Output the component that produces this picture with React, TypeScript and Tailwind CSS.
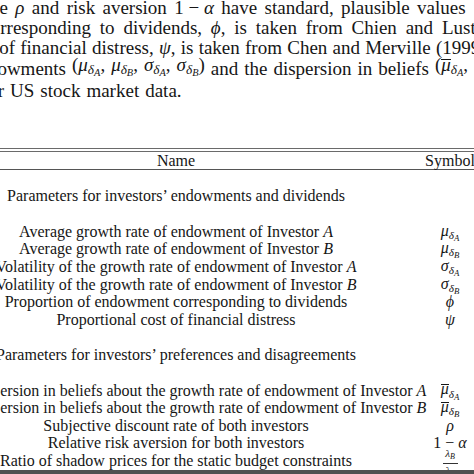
import React from "react";

const SerifWrap = "font-['Liberation_Serif','Times_New_Roman',serif]";

function MS({ b, l, bar }: { b: string; l: string; bar?: boolean }) {
  return (
    <span className="whitespace-nowrap">
      {bar ? (
        <span className="inline-block italic leading-[0.55] border-t border-current">{b}</span>
      ) : (
        <span className="italic">{b}</span>
      )}
      <span className="italic text-[0.7em] align-[-0.28em]">
        δ<span className="italic text-[0.78em] align-[-0.22em]">{l}</span>
      </span>
    </span>
  );
}

function Frac() {
  return (
    <span className="inline-flex flex-col items-center italic text-[11px] leading-[10px] align-middle relative top-[2px]">
      <span>
        λ<span className="text-[8px] align-[-2px]">B</span>
      </span>
      <span className="h-px w-[15px] bg-[#333] my-[1px]"></span>
      <span>
        λ<span className="text-[8px] align-[-2px]">A</span>
      </span>
    </span>
  );
}

type Row = { name?: React.ReactNode; sym?: React.ReactNode };

const rows: Row[] = [
  {},
  { name: "Parameters for investors’ endowments and dividends" },
  {},
  { name: <>Average growth rate of endowment of Investor <i>A</i></>, sym: <MS b="μ" l="A" /> },
  { name: <>Average growth rate of endowment of Investor <i>B</i></>, sym: <MS b="μ" l="B" /> },
  { name: <>Volatility of the growth rate of endowment of Investor <i>A</i></>, sym: <MS b="σ" l="A" /> },
  { name: <>Volatility of the growth rate of endowment of Investor <i>B</i></>, sym: <MS b="σ" l="B" /> },
  { name: "Proportion of endowment corresponding to dividends", sym: <i>ϕ</i> },
  { name: "Proportional cost of financial distress", sym: <i>ψ</i> },
  {},
  { name: "Parameters for investors’ preferences and disagreements" },
  {},
  { name: <>Dispersion in beliefs about the growth rate of endowment of Investor <i>A</i></>, sym: <MS b="μ" l="A" bar /> },
  { name: <>Dispersion in beliefs about the growth rate of endowment of Investor <i>B</i></>, sym: <MS b="μ" l="B" bar /> },
  { name: "Subjective discount rate of both investors", sym: <i>ρ</i> },
  { name: "Relative risk aversion for both investors", sym: <>1 − <i>α</i></> },
  { name: "Ratio of shadow prices for the static budget constraints", sym: <Frac /> },
];

export default function App() {
  return (
    <div className={`w-[474px] h-[474px] overflow-hidden bg-white text-[#161616] ${SerifWrap}`}>
      {/* paragraph */}
      <div className="mt-[-2px] text-[19px] leading-[20px]">
        <div className="flex justify-between items-center h-[20px] whitespace-nowrap ml-[-32px] w-[509px]">
          <span className="w-[40px] text-right">rate</span>
          <i>ρ</i>
          <span>and</span>
          <span>risk</span>
          <span>aversion</span>
          <span>
            1 − <i>α</i>
          </span>
          <span>have</span>
          <span>standard,</span>
          <span>plausible</span>
          <span className="w-[60px]">values</span>
        </div>
        <div className="flex justify-between items-center h-[20px] whitespace-nowrap ml-[-29px] w-[531px]">
          <span className="w-[120px] text-right">corresponding</span>
          <span>to</span>
          <span>dividends,</span>
          <span>
            <i>ϕ</i>,
          </span>
          <span>is</span>
          <span>taken</span>
          <span>from</span>
          <span>Chien</span>
          <span>and</span>
          <span className="w-[60px]">Lustig</span>
        </div>
        <div className="flex justify-between items-center h-[20px] whitespace-nowrap ml-[-15px] w-[511px]">
          <span className="w-[30px] text-right">of</span>
          <span>financial</span>
          <span>distress,</span>
          <span>
            <i>ψ</i>,
          </span>
          <span>is</span>
          <span>taken</span>
          <span>from</span>
          <span>Chen</span>
          <span>and</span>
          <span>Merville</span>
          <span className="w-[60px]">(1999),</span>
        </div>
        <div className="flex justify-between items-center h-[22px] whitespace-nowrap ml-[-34px] w-[529px]">
          <span className="w-[100px] text-right">endowments</span>
          <span className="inline-flex gap-[6px]">
            <span>
              (<MS b="μ" l="A" />,
            </span>
            <span>
              <MS b="μ" l="B" />,
            </span>
            <span>
              <MS b="σ" l="A" />,
            </span>
            <span>
              <MS b="σ" l="B" />)
            </span>
          </span>
          <span>and</span>
          <span>the</span>
          <span>dispersion</span>
          <span>in</span>
          <span>beliefs</span>
          <span className="w-[60px]">
            (<MS b="μ" l="A" bar />,
          </span>
        </div>
        <div className="flex gap-[6px] items-center h-[21px] whitespace-nowrap ml-[-26px]">
          <span className="w-[30px] text-right">for</span>
          <span>US</span>
          <span>stock</span>
          <span>market</span>
          <span>data.</span>
        </div>
      </div>

      {/* table */}
      <div className="mt-[47px] text-[16px]">
        <div className="h-px bg-[#6a6a6a]"></div>
        <div className="h-[2px]"></div>
        <div className="h-px bg-[#6a6a6a]"></div>
        <div className="flex items-center h-[17px] ml-[-30px] whitespace-nowrap">
          <div className="w-[412px] shrink-0 text-center">Name</div>
          <div className="w-[136px] shrink-0 text-center">Symbol</div>
        </div>
        <div className="h-px bg-[#555]"></div>
        {rows.map((r, i) => (
          <div key={i} className="flex items-center h-[17.65px] ml-[-30px] whitespace-nowrap">
            <div className="w-[412px] shrink-0 text-center">{r.name}</div>
            <div className="w-[136px] shrink-0 text-center">{r.sym}</div>
          </div>
        ))}
        <div className="relative z-10 h-[6px] bg-[#505050]"></div>
      </div>
    </div>
  );
}
